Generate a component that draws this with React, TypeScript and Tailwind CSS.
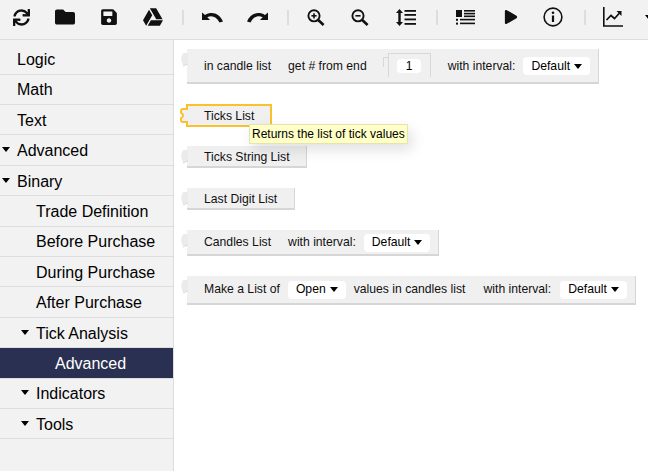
import type { ReactNode } from 'react';
import { FaFolder, FaGoogleDrive, FaPlay, FaSave, FaSync } from 'react-icons/fa';

const Caret = ({ className = '' }: { className?: string }) => (
  <span className={`inline-block w-0 h-0 border-x-[4.5px] border-x-transparent border-t-[5px] border-t-black ${className}`} />
);

const Sep = ({ className = '' }: { className?: string }) => (
  <div className={`w-[2px] h-[15px] bg-[#dddddd] shrink-0 ${className}`} />
);

const UndoIcon = ({ className = '' }: { className?: string }) => (
  <svg width="21" height="11" viewBox="0 0 21 11" fill="#111" className={`shrink-0 ${className}`}>
    <path d="M0 0.5 L0 8 L8 8 L5.3 5.3 C9.5 3 14.5 4.5 17.5 10.5 L21 9.5 C18 2 10 -1.5 3 3 Z" />
  </svg>
);

const ZoomIcon = ({ plus = false, className = '' }: { plus?: boolean; className?: string }) => (
  <svg width="18" height="17" viewBox="0 0 18 17" fill="none" stroke="#111" className={`shrink-0 ${className}`}>
    <circle cx="7" cy="6.8" r="5.6" strokeWidth="1.9" />
    <path d="M11.2 11 L16.6 16" strokeWidth="2.6" />
    <path d="M4.4 6.8 H9.6" strokeWidth="1.6" />
    {plus && <path d="M7 4.2 V9.4" strokeWidth="1.6" />}
  </svg>
);

const SortIcon = ({ className = '' }: { className?: string }) => (
  <svg width="20" height="17" viewBox="0 0 20 17" fill="#111" className={`shrink-0 ${className}`}>
    <path d="M3.5 0 L7 4 H4.7 V13 H7 L3.5 17 L0 13 H2.3 V4 H0 Z" />
    <rect x="8.5" y="1" width="11.5" height="1.8" />
    <rect x="8.5" y="5" width="11.5" height="1.8" />
    <rect x="8.5" y="9.5" width="11.5" height="1.8" />
    <rect x="8.5" y="14" width="11.5" height="1.8" />
  </svg>
);

const SummaryIcon = ({ className = '' }: { className?: string }) => (
  <svg width="19" height="15" viewBox="0 0 19 15" fill="#111" className={`shrink-0 ${className}`}>
    <rect x="0" y="0" width="6" height="7" />
    <rect x="8" y="0" width="11" height="1.6" />
    <rect x="8" y="2.8" width="11" height="1.6" />
    <rect x="8" y="5.5" width="11" height="1.6" />
    <rect x="0" y="8.8" width="2" height="2" />
    <rect x="4" y="8.8" width="15" height="1.6" />
    <rect x="0" y="12.6" width="2" height="2" />
    <rect x="4" y="12.6" width="15" height="1.6" />
  </svg>
);

const InfoIcon = ({ className = '' }: { className?: string }) => (
  <svg width="20" height="20" viewBox="0 0 20 20" fill="none" stroke="#111" className={`shrink-0 ${className}`}>
    <circle cx="10" cy="10" r="8.9" strokeWidth="1.6" />
    <circle cx="10" cy="5.8" r="1.3" fill="#111" stroke="none" />
    <path d="M10 8.5 V15" strokeWidth="2.2" />
  </svg>
);

const ChartIcon = ({ className = '' }: { className?: string }) => (
  <svg width="20" height="20" viewBox="0 0 20 20" fill="none" stroke="#111" className={`shrink-0 ${className}`}>
    <path d="M0.8 0 V19 H20" strokeWidth="1.6" />
    <path d="M3.5 13 L8 8.5 L11.5 11.5 L17 5.5" strokeWidth="1.7" />
    <path d="M13.5 4 H18.5 V9 Z" fill="#111" stroke="none" />
  </svg>
);

const Toolbar = () => (
  <div className="h-10 shrink-0 bg-[#f2f2f2] border-b border-[#dddddd] flex items-center overflow-hidden pl-[13px] pb-[5px] text-[#111]">
    <FaSync size={17} className="shrink-0" />
    <FaFolder size={20} className="shrink-0 ml-[25px]" />
    <FaSave size={18} className="shrink-0 ml-[25px]" />
    <FaGoogleDrive size={20} className="shrink-0 ml-[25px]" />
    <Sep className="ml-[19px]" />
    <UndoIcon className="ml-[18px]" />
    <UndoIcon className="ml-[24px] -scale-x-100" />
    <Sep className="ml-[19px]" />
    <ZoomIcon plus className="ml-[18px]" />
    <ZoomIcon className="ml-[26px]" />
    <SortIcon className="ml-[27px]" />
    <Sep className="ml-[20px]" />
    <SummaryIcon className="ml-[18px]" />
    <FaPlay size={14} className="shrink-0 ml-[29px]" />
    <InfoIcon className="ml-[25px]" />
    <Sep className="ml-[21px]" />
    <ChartIcon className="ml-[17px]" />
    <Caret className="ml-[22px] shrink-0" />
  </div>
);

type Row = { label: string; indent: string; caret?: boolean; active?: boolean };

const rows: Row[] = [
  { label: 'Logic', indent: 'pl-[17px]' },
  { label: 'Math', indent: 'pl-[17px]' },
  { label: 'Text', indent: 'pl-[17px]' },
  { label: 'Advanced', indent: 'pl-[17px]', caret: true },
  { label: 'Binary', indent: 'pl-[17px]', caret: true },
  { label: 'Trade Definition', indent: 'pl-[36px]' },
  { label: 'Before Purchase', indent: 'pl-[36px]' },
  { label: 'During Purchase', indent: 'pl-[36px]' },
  { label: 'After Purchase', indent: 'pl-[36px]' },
  { label: 'Tick Analysis', indent: 'pl-[36px]', caret: true },
  { label: 'Advanced', indent: 'pl-[55px]', active: true },
  { label: 'Indicators', indent: 'pl-[36px]', caret: true },
  { label: 'Tools', indent: 'pl-[36px]', caret: true },
];

const Sidebar = () => (
  <div className="w-[174px] shrink-0 pt-[4.3px] bg-[#f2f2f2] border-r border-[#dddddd]">
    {rows.map((row, i) => (
      <div
        key={i}
        className={`h-[30.4px] pt-[2px] flex items-center text-[16px] border-b border-[#dddddd] ${row.indent} ${
          row.active ? 'bg-[#2a3052] text-white' : 'text-black'
        }`}
      >
        {row.caret && <Caret className="-ml-[15px] mr-[7px] mb-[3px]" />}
        <span>{row.label}</span>
      </div>
    ))}
  </div>
);

const Tab = ({ selected = false }: { selected?: boolean }) =>
  selected ? (
    <svg width="8" height="15" viewBox="0 0 8 15" fill="#f0f0f0" stroke="#fbc02d" strokeWidth="2" className="absolute left-[-8px] top-[2px]">
      <path d="M8 1 H3 C1.5 1 1 2 1 3 V4.5 C1 5.5 3 5.5 3 7.5 C3 9.5 1 9.5 1 10.5 V12 C1 13 1.5 14 3 14 H8" />
    </svg>
  ) : (
    <svg width="7" height="14" viewBox="0 0 7 14" className="absolute left-[-6px] top-[4px]">
      <path d="M7 0 H3 C1.5 0 1.5 1.5 1 3 C0 4 0 6 0.5 8 C1 10 1.5 11 2 12 L7 11 Z" fill="#ebebeb" />
      <path d="M2 13 L6.5 11" stroke="#d4d4d4" strokeWidth="1" />
    </svg>
  );

const Dropdown = ({ label }: { label: string }) => (
  <div className="bg-white rounded-[4px] h-[18px] px-[8px] flex items-center gap-[4px] text-[12.2px] text-black">
    {label}
    <Caret className="border-x-[4px] border-t-[4px]" />
  </div>
);

const Block = ({ className = '', selected = false, children }: { className?: string; selected?: boolean; children: ReactNode }) => (
  <div
    className={`relative flex items-center text-[12.2px] text-[#111] bg-[#f0f0f0] ${
      selected ? 'border-2 border-[#fbc02d] pl-[16px] -ml-[1px]' : 'border-b-2 border-r border-[#d6d6d6] pl-[17px]'
    } ${className}`}
  >
    <Tab selected={selected} />
    {children}
  </div>
);

const Workspace = () => (
  <div className="relative flex-1 bg-white pl-[13px] pt-[9px] overflow-hidden">
    <Block className="h-[35px] w-fit pr-[8px] pt-[1px]">
      <span>in candle list</span>
      <span className="ml-[17px]">get # from end</span>
      <div className="relative ml-[21px] w-[43px] h-[24px] mb-[2px] border-l border-t border-r border-[#d8d8d8] flex items-center justify-center">
        <div className="absolute left-[-6px] top-[3px] w-[5px] h-[10px] border-l border-t border-[#d8d8d8]" />
        <div className="bg-white rounded-[4px] w-[24px] h-[14px] flex items-center justify-center text-[12px] text-black">1</div>
      </div>
      <span className="ml-[17px]">with interval:</span>
      <div className="ml-[8px]"><Dropdown label="Default" /></div>
    </Block>

    <Block selected className="h-[23px] w-[86px] mt-[20px] pt-[1px]">
      Ticks List
    </Block>

    <Block className="h-[22px] w-[120px] mt-[19px] pt-[3px]">Ticks String List</Block>
    <Block className="h-[22px] w-[108px] mt-[20px] pt-[3px]">Last Digit List</Block>

    <Block className="h-[26px] w-fit mt-[20px] pr-[8px] pt-[1px]">
      <span>Candles List</span>
      <span className="ml-[17px]">with interval:</span>
      <div className="ml-[8px]"><Dropdown label="Default" /></div>
    </Block>

    <Block className="h-[29px] w-fit mt-[20px] pr-[8px]">
      <span>Make a List of</span>
      <div className="ml-[8px]"><Dropdown label="Open" /></div>
      <span className="ml-[8px]">values in candles list</span>
      <span className="ml-[18px]">with interval:</span>
      <div className="ml-[9px]"><Dropdown label="Default" /></div>
    </Block>

    <div className="absolute left-[75px] top-[84px] h-[20px] px-[2px] flex items-center bg-[#ffffc7] border border-[#e4e4b0] text-[12px] text-black whitespace-nowrap shadow-[4px_6px_14px_rgba(0,0,0,0.12)]">
      Returns the list of tick values
    </div>
  </div>
);

export default function App() {
  return (
    <div className="w-[648px] h-[471px] flex flex-col overflow-hidden bg-white font-['Liberation_Sans',Arial,sans-serif]">
      <Toolbar />
      <div className="flex flex-1 min-h-0">
        <Sidebar />
        <Workspace />
      </div>
    </div>
  );
}
